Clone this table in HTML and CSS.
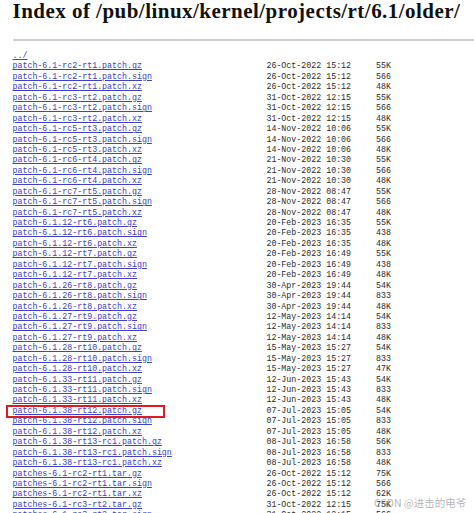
FILE: index.html
```html
<!DOCTYPE html>
<html>
<head>
<meta charset="utf-8">
<title>Index of /pub/linux/kernel/projects/rt/6.1/older/</title>
<link rel="stylesheet" href="styles.css">
</head>
<body>
<div class="page">
  <h1 class="title">Index of /pub/linux/kernel/projects/rt/6.1/older/</h1>
  <hr class="rule">
  <div class="listing">
    <div class="row"><a href="#">../</a></div>
    <div class="row"><a href="#">patch-6.1-rc2-rt1.patch.gz</a><span class="date">26-Oct-2022 15:12</span><span class="size">55K</span></div>
    <div class="row"><a href="#">patch-6.1-rc2-rt1.patch.sign</a><span class="date">26-Oct-2022 15:12</span><span class="size">566</span></div>
    <div class="row"><a href="#">patch-6.1-rc2-rt1.patch.xz</a><span class="date">26-Oct-2022 15:12</span><span class="size">48K</span></div>
    <div class="row"><a href="#">patch-6.1-rc3-rt2.patch.gz</a><span class="date">31-Oct-2022 12:15</span><span class="size">55K</span></div>
    <div class="row"><a href="#">patch-6.1-rc3-rt2.patch.sign</a><span class="date">31-Oct-2022 12:15</span><span class="size">566</span></div>
    <div class="row"><a href="#">patch-6.1-rc3-rt2.patch.xz</a><span class="date">31-Oct-2022 12:15</span><span class="size">48K</span></div>
    <div class="row"><a href="#">patch-6.1-rc5-rt3.patch.gz</a><span class="date">14-Nov-2022 10:06</span><span class="size">55K</span></div>
    <div class="row"><a href="#">patch-6.1-rc5-rt3.patch.sign</a><span class="date">14-Nov-2022 10:06</span><span class="size">566</span></div>
    <div class="row"><a href="#">patch-6.1-rc5-rt3.patch.xz</a><span class="date">14-Nov-2022 10:06</span><span class="size">48K</span></div>
    <div class="row"><a href="#">patch-6.1-rc6-rt4.patch.gz</a><span class="date">21-Nov-2022 10:30</span><span class="size">55K</span></div>
    <div class="row"><a href="#">patch-6.1-rc6-rt4.patch.sign</a><span class="date">21-Nov-2022 10:30</span><span class="size">566</span></div>
    <div class="row"><a href="#">patch-6.1-rc6-rt4.patch.xz</a><span class="date">21-Nov-2022 10:30</span><span class="size">48K</span></div>
    <div class="row"><a href="#">patch-6.1-rc7-rt5.patch.gz</a><span class="date">28-Nov-2022 08:47</span><span class="size">55K</span></div>
    <div class="row"><a href="#">patch-6.1-rc7-rt5.patch.sign</a><span class="date">28-Nov-2022 08:47</span><span class="size">566</span></div>
    <div class="row"><a href="#">patch-6.1-rc7-rt5.patch.xz</a><span class="date">28-Nov-2022 08:47</span><span class="size">48K</span></div>
    <div class="row"><a href="#">patch-6.1.12-rt6.patch.gz</a><span class="date">20-Feb-2023 16:35</span><span class="size">55K</span></div>
    <div class="row"><a href="#">patch-6.1.12-rt6.patch.sign</a><span class="date">20-Feb-2023 16:35</span><span class="size">438</span></div>
    <div class="row"><a href="#">patch-6.1.12-rt6.patch.xz</a><span class="date">20-Feb-2023 16:35</span><span class="size">48K</span></div>
    <div class="row"><a href="#">patch-6.1.12-rt7.patch.gz</a><span class="date">20-Feb-2023 16:49</span><span class="size">55K</span></div>
    <div class="row"><a href="#">patch-6.1.12-rt7.patch.sign</a><span class="date">20-Feb-2023 16:49</span><span class="size">438</span></div>
    <div class="row"><a href="#">patch-6.1.12-rt7.patch.xz</a><span class="date">20-Feb-2023 16:49</span><span class="size">48K</span></div>
    <div class="row"><a href="#">patch-6.1.26-rt8.patch.gz</a><span class="date">30-Apr-2023 19:44</span><span class="size">54K</span></div>
    <div class="row"><a href="#">patch-6.1.26-rt8.patch.sign</a><span class="date">30-Apr-2023 19:44</span><span class="size">833</span></div>
    <div class="row"><a href="#">patch-6.1.26-rt8.patch.xz</a><span class="date">30-Apr-2023 19:44</span><span class="size">48K</span></div>
    <div class="row"><a href="#">patch-6.1.27-rt9.patch.gz</a><span class="date">12-May-2023 14:14</span><span class="size">54K</span></div>
    <div class="row"><a href="#">patch-6.1.27-rt9.patch.sign</a><span class="date">12-May-2023 14:14</span><span class="size">833</span></div>
    <div class="row"><a href="#">patch-6.1.27-rt9.patch.xz</a><span class="date">12-May-2023 14:14</span><span class="size">48K</span></div>
    <div class="row"><a href="#">patch-6.1.28-rt10.patch.gz</a><span class="date">15-May-2023 15:27</span><span class="size">54K</span></div>
    <div class="row"><a href="#">patch-6.1.28-rt10.patch.sign</a><span class="date">15-May-2023 15:27</span><span class="size">833</span></div>
    <div class="row"><a href="#">patch-6.1.28-rt10.patch.xz</a><span class="date">15-May-2023 15:27</span><span class="size">47K</span></div>
    <div class="row"><a href="#">patch-6.1.33-rt11.patch.gz</a><span class="date">12-Jun-2023 15:43</span><span class="size">54K</span></div>
    <div class="row"><a href="#">patch-6.1.33-rt11.patch.sign</a><span class="date">12-Jun-2023 15:43</span><span class="size">833</span></div>
    <div class="row"><a href="#">patch-6.1.33-rt11.patch.xz</a><span class="date">12-Jun-2023 15:43</span><span class="size">48K</span></div>
    <div class="row highlighted"><a href="#">patch-6.1.38-rt12.patch.gz</a><span class="date">07-Jul-2023 15:05</span><span class="size">54K</span><span class="mark"></span></div>
    <div class="row"><a href="#">patch-6.1.38-rt12.patch.sign</a><span class="date">07-Jul-2023 15:05</span><span class="size">833</span></div>
    <div class="row"><a href="#">patch-6.1.38-rt12.patch.xz</a><span class="date">07-Jul-2023 15:05</span><span class="size">48K</span></div>
    <div class="row"><a href="#">patch-6.1.38-rt13-rc1.patch.gz</a><span class="date">08-Jul-2023 16:58</span><span class="size">56K</span></div>
    <div class="row"><a href="#">patch-6.1.38-rt13-rc1.patch.sign</a><span class="date">08-Jul-2023 16:58</span><span class="size">833</span></div>
    <div class="row"><a href="#">patch-6.1.38-rt13-rc1.patch.xz</a><span class="date">08-Jul-2023 16:58</span><span class="size">48K</span></div>
    <div class="row"><a href="#">patches-6.1-rc2-rt1.tar.gz</a><span class="date">26-Oct-2022 15:12</span><span class="size">75K</span></div>
    <div class="row"><a href="#">patches-6.1-rc2-rt1.tar.sign</a><span class="date">26-Oct-2022 15:12</span><span class="size">566</span></div>
    <div class="row"><a href="#">patches-6.1-rc2-rt1.tar.xz</a><span class="date">26-Oct-2022 15:12</span><span class="size">62K</span></div>
    <div class="row"><a href="#">patches-6.1-rc3-rt2.tar.gz</a><span class="date">31-Oct-2022 12:15</span><span class="size">75K</span></div>
    <div class="row"><a href="#">patches-6.1-rc3-rt2.tar.sign</a><span class="date">31-Oct-2022 12:15</span><span class="size">566</span></div>
  </div>
</div>
<div class="watermark">CSDN @进击的电爷</div>
</body>
</html>
```

FILE: styles.css
```css
html, body {
  margin: 0;
  padding: 0;
  background: #ffffff;
  overflow: hidden;
}

body {
  width: 474px;
  height: 513px;
  position: relative;
}

.page {
  padding-left: 12.5px;
}

.title {
  margin: 0;
  font-family: "Liberation Serif", "Times New Roman", serif;
  font-weight: bold;
  font-size: 21px;
  letter-spacing: 0.47px;
  line-height: 23px;
  color: #111;
  white-space: nowrap;
}

.rule {
  margin: 15.5px 0 0 0;
  height: 0;
  border: none;
  border-top: 2px solid #cdcdcd;
}

.listing {
  margin-top: 10.5px;
  font-family: "Liberation Mono", "DejaVu Sans Mono", monospace;
  font-size: 8.3px;
  line-height: 10.45px;
  color: #2b2b2b;
}

.row {
  display: grid;
  grid-template-columns: 51ch 17ch 8ch;
  height: 10.45px;
  white-space: pre;
}

.row a {
  color: #4040c8;
  text-decoration: underline;
}

.size {
  text-align: right;
}

.highlighted {
  position: relative;
}

.mark {
  position: absolute;
  left: -6.5px;
  top: -1.2px;
  width: 155px;
  height: 9px;
  border: 2.5px solid #dc1c22;
}

.watermark {
  position: absolute;
  left: 374px;
  top: 495px;
  font-family: "Noto Sans CJK SC", "Noto Sans", sans-serif;
  font-size: 10.5px;
  line-height: 15px;
  color: rgba(130, 130, 130, 0.6);
  white-space: nowrap;
}
```
